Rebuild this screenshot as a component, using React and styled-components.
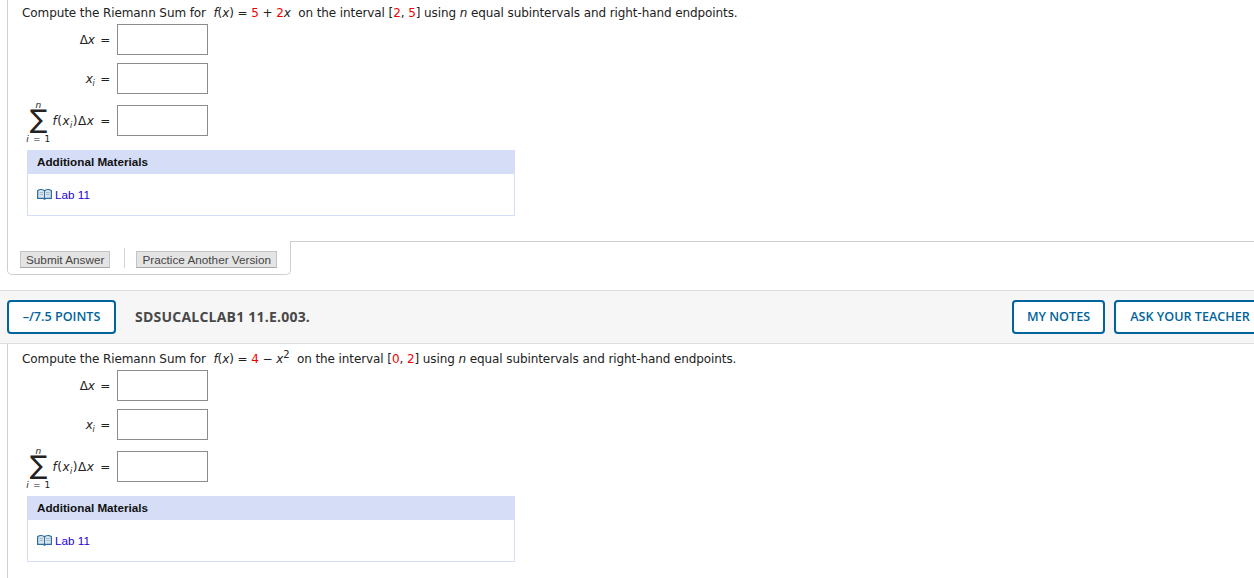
import React from 'react';
import styled, { createGlobalStyle } from 'styled-components';

const GlobalStyle = createGlobalStyle`
  html, body {
    margin: 0;
    padding: 0;
    height: 578px;
    overflow: hidden;
    background: #fff;
  }
`;

const Page = styled.div`
  width: 1270px;
  margin-top: -2px;
  font-family: "DejaVu Sans", Verdana, sans-serif;
  font-size: 12px;
  color: #222;
`;

const Body = styled.div`
  margin-left: 7px;
  padding: 2px 0 25px 14px;
  border-left: 1px solid #d0d0d0;
`;

const Prompt = styled.div`
  height: 24px;
  line-height: 26px;
  white-space: pre;
  letter-spacing: -0.09px;
`;

const Var = styled.i`
  font-style: italic;
`;

const Red = styled.span`
  color: #f00000;
`;

const Sup = styled.sup`
  font-size: 10px;
  line-height: 0;
  vertical-align: 5px;
`;

const Answers = styled.div`
  display: grid;
  grid-template-columns: 88px 91px;
  column-gap: 7px;
  row-gap: 8px;
  margin-bottom: 11px;
`;

const Label = styled.div`
  display: flex;
  align-items: center;
  justify-content: flex-end;
  gap: 6px;
  height: ${p => (p.$tall ? '37px' : '31px')};
  letter-spacing: -0.4px;
`;

const Formula = styled.span`
  letter-spacing: 0.5px;
  white-space: pre;
`;

const Box = styled.div`
  width: 91px;
  height: 31px;
  box-sizing: border-box;
  border: 1px solid #8c8c8c;
  background: #fff;
  align-self: center;
`;

const Sub = styled.sub`
  font-size: 8px;
  line-height: 0;
  vertical-align: -3px;
`;

const SumSign = styled.div`
  display: flex;
  flex-direction: column;
  align-items: center;
  width: 24px;
  margin: 4px -4px 0 0;
  letter-spacing: 0;
`;

const SumBound = styled.span`
  font-size: 9px;
  line-height: 9px;
  letter-spacing: 0.6px;
  white-space: pre;
`;

const SumGlyph = styled.span`
  font-size: 26px;
  line-height: 25px;
  margin: -3px 0 3px;
`;

const Materials = styled.div`
  width: 488px;
  margin-left: 5px;
  font-family: "Liberation Sans", Arial, sans-serif;
  font-size: 11.7px;
  box-sizing: border-box;
  border: 1px solid #d6def7;
  border-top: 0;
`;

const MaterialsHead = styled.div`
  height: 24px;
  line-height: 23px;
  margin: 0 -1px;
  padding-left: 10px;
  background: #d6def7;
  font-weight: bold;
  color: #111;
`;

const MaterialsBody = styled.div`
  display: flex;
  align-items: center;
  gap: 3px;
  height: 41px;
  padding-left: 9px;
`;

const LabLink = styled.span`
  color: #2200dd;
`;

const Footer = styled.div`
  display: flex;
`;

const Tray = styled.div`
  display: flex;
  align-items: flex-end;
  box-sizing: border-box;
  width: 284px;
  height: 34px;
  margin-left: 7px;
  padding: 0 12px 6px 12px;
  border: 1px solid #cfcfcf;
  border-top: 0;
  border-radius: 0 0 5px 5px;
`;

const Filler = styled.div`
  flex: 1;
  border-top: 1px solid #cfcfcf;
  margin-left: -1px;
`;

const GrayButton = styled.button`
  flex: none;
  height: 17px;
  padding: 0 5px;
  box-sizing: border-box;
  font-family: "Liberation Sans", Arial, sans-serif;
  font-size: 11.75px;
  line-height: 15px;
  white-space: nowrap;
  color: #444;
  background: #e4e4e4;
  border: 1px solid #c4c4c4;
  border-bottom-color: #a8a8a8;
`;

const Divider = styled.div`
  flex: none;
  width: 1px;
  height: 20px;
  margin: 0 11px 0 14px;
  background: #d4d4d4;
`;

const Header = styled.div`
  display: flex;
  align-items: center;
  box-sizing: border-box;
  height: 54px;
  margin-top: 15px;
  padding: 0 4px 0 7px;
  background: #f6f6f6;
  border-top: 1px solid #dedede;
  border-bottom: 1px solid #dedede;
  font-family: "Open Sans", sans-serif;
`;

const OutlineButton = styled.div`
  display: flex;
  align-items: center;
  justify-content: center;
  box-sizing: border-box;
  width: ${p => p.$width}px;
  height: 34px;
  margin-left: ${p => p.$gap || 0}px;
  padding-bottom: 2px;
  border: 2px solid #00649c;
  border-radius: 4px;
  background: #fff;
  font-size: 12.6px;
  font-weight: 600;
  white-space: nowrap;
  color: #00649c;
`;

const Title = styled.div`
  margin-left: 19px;
  padding-bottom: 2px;
  flex: 1;
  font-size: 14px;
  font-weight: 700;
  letter-spacing: 0.22px;
  color: #484848;
`;

const BookIcon = () => (
  <svg width="15" height="13" viewBox="0 0 15 13">
    <path d="M0 2.500C2 .5 5 .5 7.500 2C10 .5 13 .5 15 2.500V11H9l-1.500 1-1.500-1H0z" fill="#2f6f9f" />
    <path d="M1.200 3C3 1.800 5.500 1.800 7 3.200V9.800H1.200zM8 3.200C9.500 1.800 12 1.800 13.800 3V9.800H8z" fill="#d8e4ee" />
    <path d="M2.500 4.500h3.500M2.500 6.500h3.500M9 4.500h3.500M9 6.500h3.500" stroke="#a0b8cc" strokeWidth="1" />
  </svg>
);

const Question = ({ fn, interval }) => (
  <Body>
    <Prompt>Compute the Riemann Sum for  <Var>f</Var>(<Var>x</Var>) = {fn}  on the interval [{interval}] using <Var>n</Var> equal subintervals and right-hand endpoints.</Prompt>
    <Answers>
      <Label><span>Δ<Var>x</Var></span><span>=</span></Label>
      <Box />
      <Label><span><Var>x</Var><Sub><Var>i</Var></Sub></span><span>=</span></Label>
      <Box />
      <Label $tall>
        <SumSign>
          <SumBound><Var>n</Var></SumBound>
          <SumGlyph>∑</SumGlyph>
          <SumBound><Var>i</Var> = 1</SumBound>
        </SumSign>
        <Formula><Var>f</Var>(<Var>x</Var><Sub><Var>i</Var></Sub>)Δ<Var>x</Var></Formula>
        <span>=</span>
      </Label>
      <Box />
    </Answers>
    <Materials>
      <MaterialsHead>Additional Materials</MaterialsHead>
      <MaterialsBody>
        <BookIcon />
        <LabLink>Lab 11</LabLink>
      </MaterialsBody>
    </Materials>
  </Body>
);

export default function App() {
  return (
    <Page>
      <GlobalStyle />
      <Question
        fn={<><Red>5</Red> + <Red>2</Red><Var>x</Var></>}
        interval={<><Red>2</Red>, <Red>5</Red></>}
      />
      <Footer>
        <Tray>
          <GrayButton>Submit Answer</GrayButton>
          <Divider />
          <GrayButton>Practice Another Version</GrayButton>
        </Tray>
        <Filler />
      </Footer>
      <Header>
        <OutlineButton $width={109}>–/7.5 POINTS</OutlineButton>
        <Title>SDSUCALCLAB1 11.E.003.</Title>
        <OutlineButton $width={93}>MY NOTES</OutlineButton>
        <OutlineButton $width={152} $gap={9}>ASK YOUR TEACHER</OutlineButton>
      </Header>
      <Question
        fn={<><Red>4</Red> − <Var>x</Var><Sup>2</Sup></>}
        interval={<><Red>0</Red>, <Red>2</Red></>}
      />
    </Page>
  );
}
